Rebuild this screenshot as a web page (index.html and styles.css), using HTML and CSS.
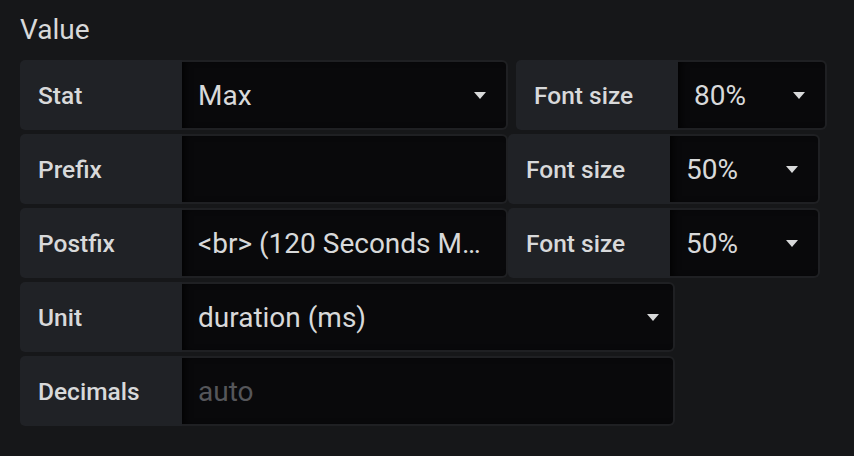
FILE: index.html
```html
<!DOCTYPE html>
<html>
<head>
<meta charset="utf-8">
<link rel="stylesheet" href="styles.css">
</head>
<body>
<div class="section">
  <h5 class="title">Value</h5>
  <div class="row">
    <div class="field">
      <label class="label">Stat</label>
      <div class="input select w-stat"><span class="text">Max</span><span class="caret"></span></div>
    </div>
    <div class="field gap">
      <label class="label">Font size</label>
      <div class="input select w-fs1"><span class="text">80%</span><span class="caret"></span></div>
    </div>
  </div>
  <div class="row">
    <div class="field">
      <label class="label">Prefix</label>
      <div class="input w-main"><span class="text"></span></div>
    </div>
    <div class="field">
      <label class="label">Font size</label>
      <div class="input select w-fs"><span class="text">50%</span><span class="caret"></span></div>
    </div>
  </div>
  <div class="row">
    <div class="field">
      <label class="label">Postfix</label>
      <div class="input w-main"><span class="text">&lt;br&gt; (120 Seconds Moving Average)</span></div>
    </div>
    <div class="field">
      <label class="label">Font size</label>
      <div class="input select w-fs"><span class="text">50%</span><span class="caret"></span></div>
    </div>
  </div>
  <div class="row">
    <div class="field">
      <label class="label">Unit</label>
      <div class="input select w-unit"><span class="text">duration (ms)</span><span class="caret"></span></div>
    </div>
  </div>
  <div class="row">
    <div class="field">
      <label class="label">Decimals</label>
      <div class="input w-unit"><span class="text placeholder">auto</span></div>
    </div>
  </div>
</div>
</body>
</html>
```
FILE: styles.css
```css
html, body {
  margin: 0;
  padding: 0;
  background: #161719;
  width: 854px;
  height: 456px;
  overflow: hidden;
  font-family: Roboto, "Liberation Sans", sans-serif;
  color: #d8d9da;
}
.section {
  padding: 11px 0 0 20px;
}
.title {
  margin: 0 0 11px 0;
  font-size: 28px;
  font-weight: 400;
  line-height: 38px;
  color: #d8d9da;
}
.row {
  display: flex;
  margin-bottom: 4px;
}
.field {
  display: flex;
  height: 70px;
}
.field.gap {
  margin-left: 8px;
}
.label {
  box-sizing: border-box;
  width: 162px;
  height: 70px;
  background: #202226;
  border-radius: 5px 0 0 5px;
  padding: 0 18px;
  display: flex;
  align-items: center;
  font-size: 24.5px;
  font-weight: 500;
  color: #d8d9da;
}
.input {
  box-sizing: border-box;
  height: 70px;
  background: #09090b;
  border: 2px solid #1f2023;
  border-left: none;
  border-radius: 0 6px 6px 0;
  box-shadow: inset 6px 0 8px -4px rgba(0,0,0,0.9);
  display: flex;
  align-items: center;
  padding: 0 20px 0 16px;
  font-size: 28px;
  color: #d8d9da;
  min-width: 0;
}
.text {
  flex: 1;
  white-space: nowrap;
  overflow: hidden;
  text-overflow: ellipsis;
  min-width: 0;
}
.placeholder {
  color: #55565a;
}
.caret {
  flex: none;
  width: 0;
  height: 0;
  border-left: 6.5px solid transparent;
  border-right: 6.5px solid transparent;
  border-top: 7px solid #d8d9da;
  margin-left: 10px;
}
.w-stat { width: 326px; }
.w-main { width: 326px; padding-right: 18px; }
.w-fs1 { width: 149px; }
.w-fs { width: 150px; }
.w-unit { width: 493px; padding-right: 14px; }
```
